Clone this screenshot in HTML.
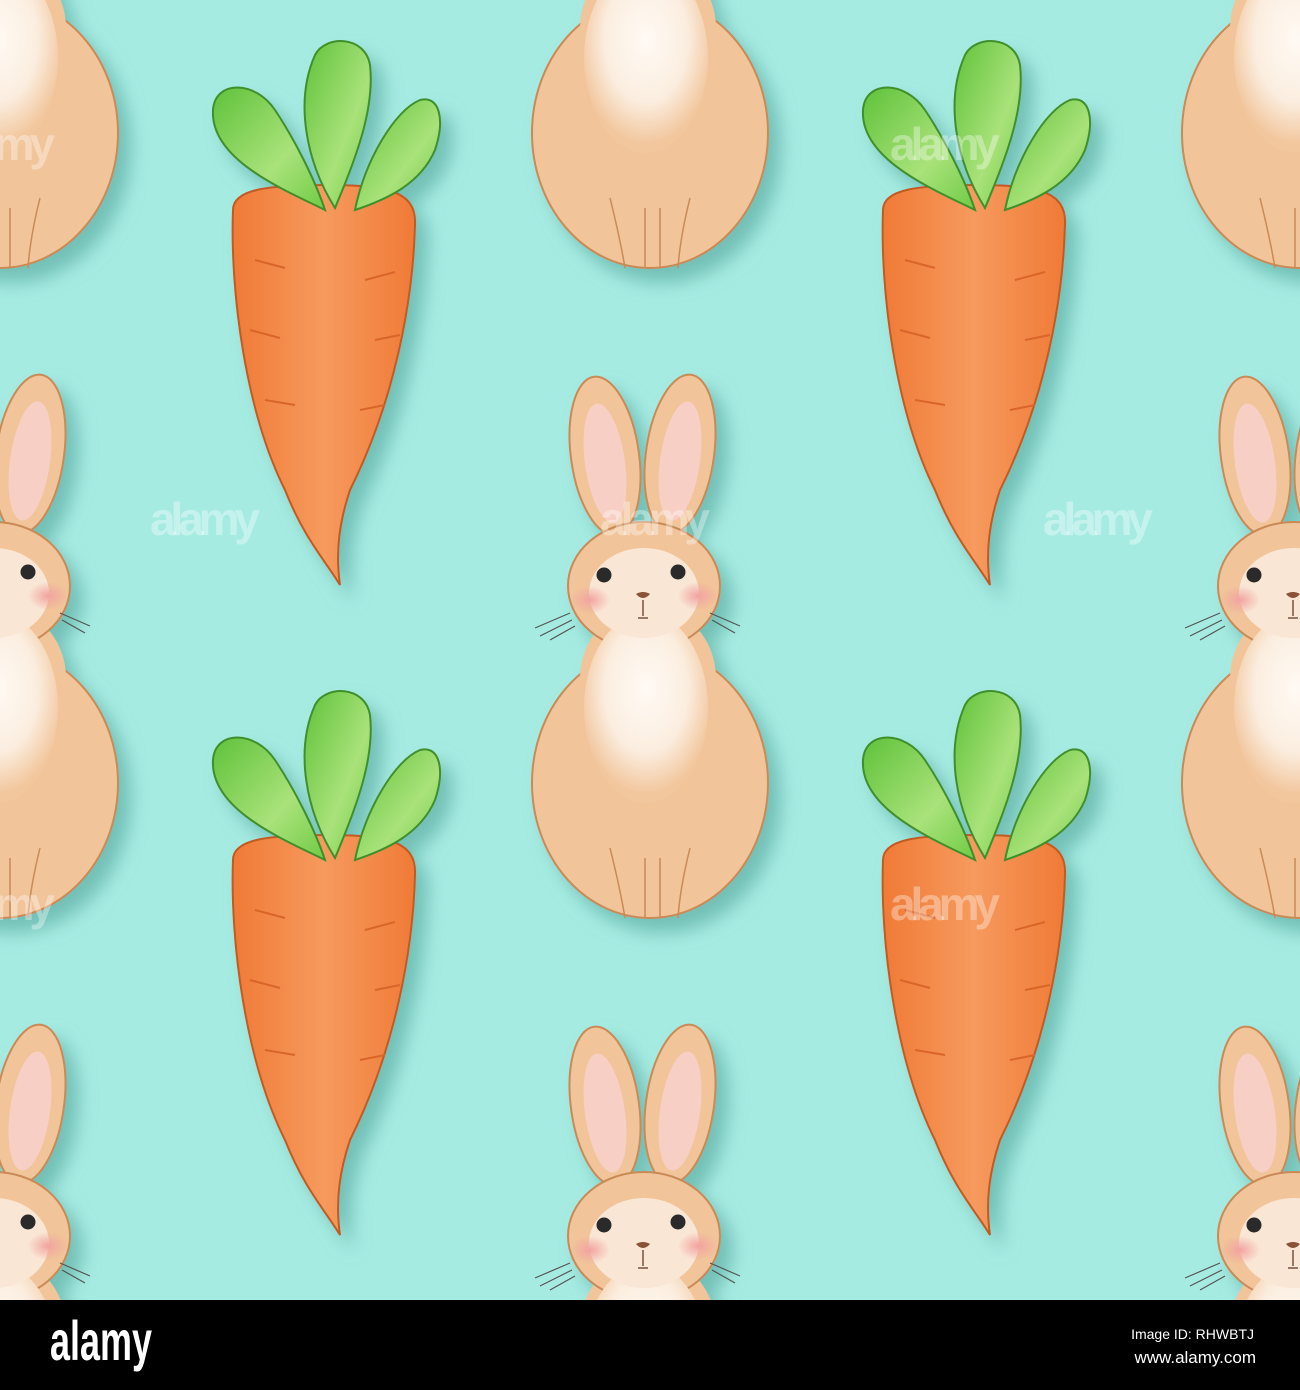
<!DOCTYPE html>
<html><head><meta charset="utf-8"><style>
html,body{margin:0;padding:0;width:1300px;height:1390px;overflow:hidden;background:#000}
svg{display:block}
</style></head><body>
<svg width="1300" height="1390" viewBox="0 0 1300 1390" xmlns="http://www.w3.org/2000/svg">
<defs>
<filter id="sh" x="-30%" y="-30%" width="160%" height="160%">
<feDropShadow dx="12" dy="14" stdDeviation="9" flood-color="#4a9c92" flood-opacity="0.55"/>
</filter>
<radialGradient id="belly" cx="0.5" cy="0.4" r="0.55">
<stop offset="0" stop-color="#fffaf4"/><stop offset="0.6" stop-color="#fbeee0"/><stop offset="1" stop-color="#f2c79e"/>
</radialGradient>
<radialGradient id="cheek" cx="0.5" cy="0.5" r="0.5">
<stop offset="0" stop-color="#f2a3a0"/><stop offset="1" stop-color="#f2a3a0" stop-opacity="0"/>
</radialGradient>
<linearGradient id="car" x1="0" y1="0" x2="1" y2="0">
<stop offset="0" stop-color="#f07a36"/><stop offset="0.5" stop-color="#f69a5e"/><stop offset="1" stop-color="#f07a36"/>
</linearGradient>
<linearGradient id="leaf" x1="0" y1="0" x2="1" y2="1">
<stop offset="0" stop-color="#5fc23a"/><stop offset="0.6" stop-color="#a9e27a"/><stop offset="1" stop-color="#6fcb45"/>
</linearGradient>
<g id="bunny">
<g filter="url(#sh)">
<ellipse cx="-45" cy="78" rx="34" ry="80" transform="rotate(-8 -45 78)" fill="#f1c49a" stroke="#c98a56" stroke-width="2"/>
<ellipse cx="30" cy="76" rx="34" ry="80" transform="rotate(8 30 76)" fill="#f1c49a" stroke="#c98a56" stroke-width="2"/>
<ellipse cx="-45" cy="85" rx="20" ry="60" transform="rotate(-8 -45 85)" fill="#f7cfc4"/>
<ellipse cx="30" cy="83" rx="20" ry="60" transform="rotate(8 30 83)" fill="#f7cfc4"/>
<ellipse cx="0" cy="405" rx="118" ry="135" fill="#f1c49a" stroke="#c98a56" stroke-width="2"/>
<ellipse cx="-2" cy="300" rx="68" ry="72" fill="#f1c49a"/>
<ellipse cx="-6" cy="208" rx="76" ry="64" fill="#f1c49a" stroke="#c98a56" stroke-width="2"/>
</g>
<ellipse cx="-4" cy="330" rx="62" ry="95" fill="url(#belly)"/>
<ellipse cx="-6" cy="215" rx="55" ry="45" fill="#f9e6d4"/>
<ellipse cx="-60" cy="222" rx="20" ry="14" fill="url(#cheek)"/>
<ellipse cx="48" cy="218" rx="20" ry="14" fill="url(#cheek)"/>
<circle cx="-46" cy="197" r="7.5" fill="#2b2a2a"/>
<circle cx="28" cy="194" r="7.5" fill="#2b2a2a"/>
<path d="M-14 216 Q-7 212 0 216 Q-7 224 -14 216Z" fill="#8a5236"/>
<path d="M-7 222 V238 M-12 240 H-2" stroke="#7a5040" stroke-width="1.5" fill="none"/>
<path d="M-80 235 L-115 250 M-78 242 L-110 258 M-75 248 L-100 262 M60 235 L90 248 M62 242 L85 255" stroke="#555" stroke-width="1.2" fill="none"/>
<path d="M-40 470 Q-30 510 -25 540 M-5 480 V540 M10 480 V540 M40 470 Q30 510 28 540" stroke="#c98a56" stroke-width="1.5" fill="none"/>
</g>
<g id="carrot">
<g filter="url(#sh)">
<path d="M-92 170 C-92 150 -60 145 0 145 C60 145 92 150 90 185 C88 260 70 360 25 450 C15 480 10 510 15 545 C0 520 -20 500 -40 450 C-80 370 -95 250 -92 170Z" fill="url(#car)" stroke="#c25a20" stroke-width="2"/>
<path d="M0 170 C-40 150 -115 120 -112 70 C-110 40 -70 40 -50 70 C-30 100 -10 140 0 170Z" fill="url(#leaf)" stroke="#3f8f2a" stroke-width="2"/>
<path d="M10 168 C-20 120 -30 60 -10 15 C0 -5 40 -5 45 25 C50 70 30 120 10 168Z" fill="url(#leaf)" stroke="#3f8f2a" stroke-width="2"/>
<path d="M30 170 C40 120 70 70 95 60 C115 55 120 80 110 110 C95 145 60 160 30 170Z" fill="url(#leaf)" stroke="#3f8f2a" stroke-width="2"/>
</g>
<path d="M-70 220 L-40 228 M40 240 L70 232 M-75 290 L-45 298 M50 300 L75 295 M-60 360 L-30 365 M35 370 L60 365" stroke="#d9652a" stroke-width="2" fill="none"/>
</g>
</defs>
<rect width="1300" height="1300" fill="#a6ebe2"/>
<use href="#carrot" x="325" y="40"/>
<use href="#carrot" x="975" y="40"/>
<use href="#carrot" x="325" y="690"/>
<use href="#carrot" x="975" y="690"/>
<use href="#bunny" x="650" y="-272"/>
<use href="#bunny" x="650" y="378"/>
<use href="#bunny" x="650" y="1028"/>
<use href="#bunny" x="0" y="-272"/>
<use href="#bunny" x="0" y="378"/>
<use href="#bunny" x="0" y="1028"/>
<use href="#bunny" x="1300" y="-272"/>
<use href="#bunny" x="1300" y="378"/>
<use href="#bunny" x="1300" y="1028"/>
<g fill="#ffffff" fill-opacity="0.35" font-family="Liberation Sans, sans-serif" font-weight="bold" font-size="46">
<text x="150" y="535" textLength="110">alamy</text>
<text x="600" y="535" textLength="110">alamy</text>
<text x="1043" y="535" textLength="110">alamy</text>
<text x="-55" y="160" textLength="110">alamy</text>
<text x="890" y="160" textLength="110">alamy</text>
<text x="-55" y="920" textLength="110">alamy</text>
<text x="890" y="920" textLength="110">alamy</text>
</g>
<rect y="1300" width="1300" height="90" fill="#000"/>
<text x="50" y="1360" fill="#fff" font-family="Liberation Sans Narrow, Liberation Sans, sans-serif" font-weight="bold" font-size="56" textLength="102" lengthAdjust="spacingAndGlyphs">alamy</text>
<text x="1254" y="1339" fill="#fff" text-anchor="end" font-family="Liberation Sans Narrow, Liberation Sans, sans-serif" font-size="14">Image ID: RHWBTJ</text>
<text x="1256" y="1363" fill="#fff" text-anchor="end" font-family="Liberation Sans Narrow, Liberation Sans, sans-serif" font-size="17">www.alamy.com</text>
</svg>
</body></html>
